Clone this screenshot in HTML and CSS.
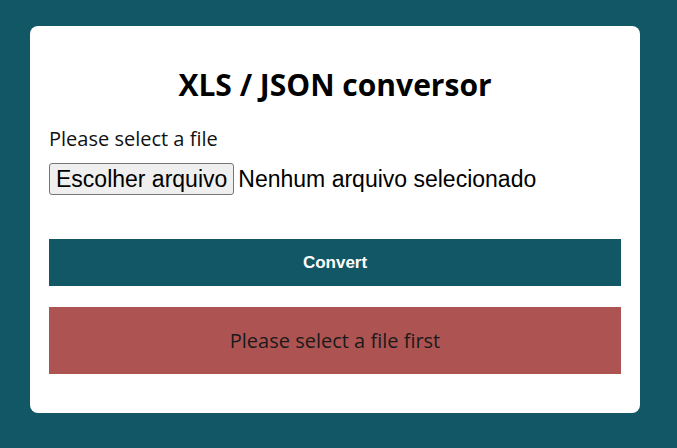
FILE: index.html
```html
<!DOCTYPE html>
<html lang="pt">
<head>
<meta charset="utf-8">
<title>XLS / JSON conversor</title>
<link rel="stylesheet" href="styles.css">
</head>
<body>
<main class="card">
  <h1 class="title">XLS / JSON conversor</h1>
  <p class="label">Please select a file</p>
  <div class="file">
    <input class="file-input" id="file" type="file">
    <label class="file-button" for="file">Escolher arquivo</label>
    <span class="file-name">Nenhum arquivo selecionado</span>
  </div>
  <button class="convert" type="button">Convert</button>
  <div class="error">Please select a file first</div>
</main>
</body>
</html>
```
FILE: styles.css
```css
html, body {
  margin: 0;
  padding: 0;
}
body {
  background: #125766;
  font-family: "Open Sans", sans-serif;
  color: #111;
}
.card {
  box-sizing: border-box;
  width: 610px;
  margin: 26px 0 0 30px;
  padding: 19px 19px 39px;
  background: #fff;
  border-radius: 8px;
  display: flex;
  flex-direction: column;
}
.title {
  margin: 19px 0 20px;
  font-size: 30px;
  font-weight: 700;
  line-height: 41px;
  text-align: center;
  color: #000;
}
.label {
  margin: 0 0 11px;
  font-size: 20px;
  line-height: 27px;
}
.file {
  display: flex;
  align-items: center;
  height: 32px;
  font-family: "Liberation Sans", Arial, sans-serif;
  font-size: 23px;
  color: #000;
}
.file-input {
  display: none;
}
.file-button {
  box-sizing: border-box;
  height: 32px;
  display: flex;
  align-items: center;
  padding: 0 6px;
  margin-right: 4px;
  background: #efefef;
  border: 1px solid #767676;
  border-radius: 3px;
  color: #000;
}
.convert {
  margin-top: 44px;
  height: 47px;
  border: none;
  background: #125766;
  color: #fff;
  font-family: "Liberation Sans", Arial, sans-serif;
  font-size: 17px;
  font-weight: 700;
}
.error {
  margin-top: 21px;
  height: 67px;
  background: #ad5453;
  color: #1a1a1a;
  font-size: 20px;
  display: flex;
  align-items: center;
  justify-content: center;
}
```
